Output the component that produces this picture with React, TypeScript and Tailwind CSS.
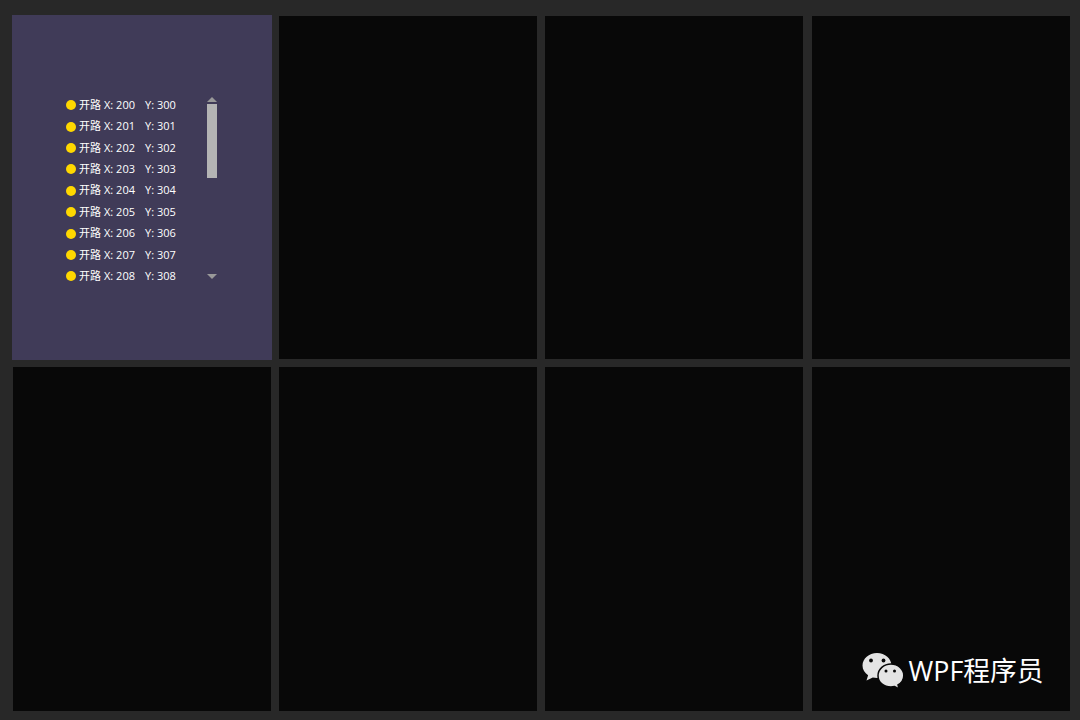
import React from 'react';

const rows = [0, 1, 2, 3, 4, 5, 6, 7, 8];

function WeChatIcon() {
  return (
    <svg width="42" height="37" viewBox="0 0 42 37">
      <path d="M15 1C6.900 1 0.500 6.600 0.500 13.500c0 4 2.200 7.500 5.600 9.800L4.500 28.500l6.300-3.100c1.300.3 2.800.5 4.200.5 8.100 0 14.500-5.500 14.500-12.400S23.100 1 15 1z" fill="#e4e4e4" />
      <path d="M29 12c-7.200 0-13 5.200-13 11.800S21.800 35 29 35c1.200 0 2.400-.2 3.600-.5l4.400 2.300-1-3.900c3.500-2.100 5.800-5.700 5.800-9.500C41.800 17.200 36.200 12 29 12z" fill="#e4e4e4" stroke="#080808" strokeWidth="1.500" />
      <circle cx="9" cy="8.500" r="1.900" fill="#080808" />
      <circle cx="21.500" cy="8.500" r="1.900" fill="#080808" />
      <circle cx="24" cy="19" r="1.500" fill="#080808" />
      <circle cx="32.500" cy="19" r="1.500" fill="#080808" />
    </svg>
  );
}

function ListPanel() {
  return (
    <div className="-m-[1px] flex items-center justify-center bg-[#403b58] pl-[54.500px] pr-[54.500px] pt-[7px]">
      <div className="flex w-full items-stretch justify-between">
        <div className="flex flex-col">
          {rows.map(i => (
            <div key={i} className="flex h-[21.4px] items-center text-[11px] text-white">
              <span className="mr-[3px] h-[10px] w-[10px] rounded-full bg-[#ffd800]" />
              <span className="w-[25px]">开路</span>
              <span className="w-[41px]">X: {200 + i}</span>
              <span>Y: {300 + i}</span>
            </div>
          ))}
        </div>
        <div className="flex w-[10px] flex-col items-center justify-between pb-[5px] pt-[3px]">
          <div className="flex flex-col items-center gap-[2px]">
            <div className="h-0 w-0 border-x-[5px] border-b-[5px] border-x-transparent border-b-[#999999]" />
            <div className="h-[74px] w-[10px] bg-[#b4b4b4]" />
          </div>
          <div className="mb-[3px] h-0 w-0 border-x-[5px] border-t-[5px] border-x-transparent border-t-[#999999]" />
        </div>
      </div>
    </div>
  );
}

export default function App() {
  return (
    <div
      className="grid h-[720px] w-[1080px] grid-cols-[258px_258px_258px_258px] grid-rows-[342.500px_343.500px] gap-x-[8.400px] gap-y-[8.500px] overflow-hidden bg-[#282828] pl-[12.500px] pt-[16px]"
      style={{ fontFamily: '"Open Sans", "Noto Sans CJK SC", sans-serif' }}
    >
      <ListPanel />
      {[1, 2, 3, 4, 5, 6].map(i => (
        <div key={i} className="bg-[#080808]" />
      ))}
      <div className="flex items-end justify-end bg-[#080808] pb-[21px] pr-[26px]">
        <div className="flex items-center gap-[5px]">
          <WeChatIcon />
          <span className="text-[26.800px] leading-[38px] text-white">WPF程序员</span>
        </div>
      </div>
    </div>
  );
}
